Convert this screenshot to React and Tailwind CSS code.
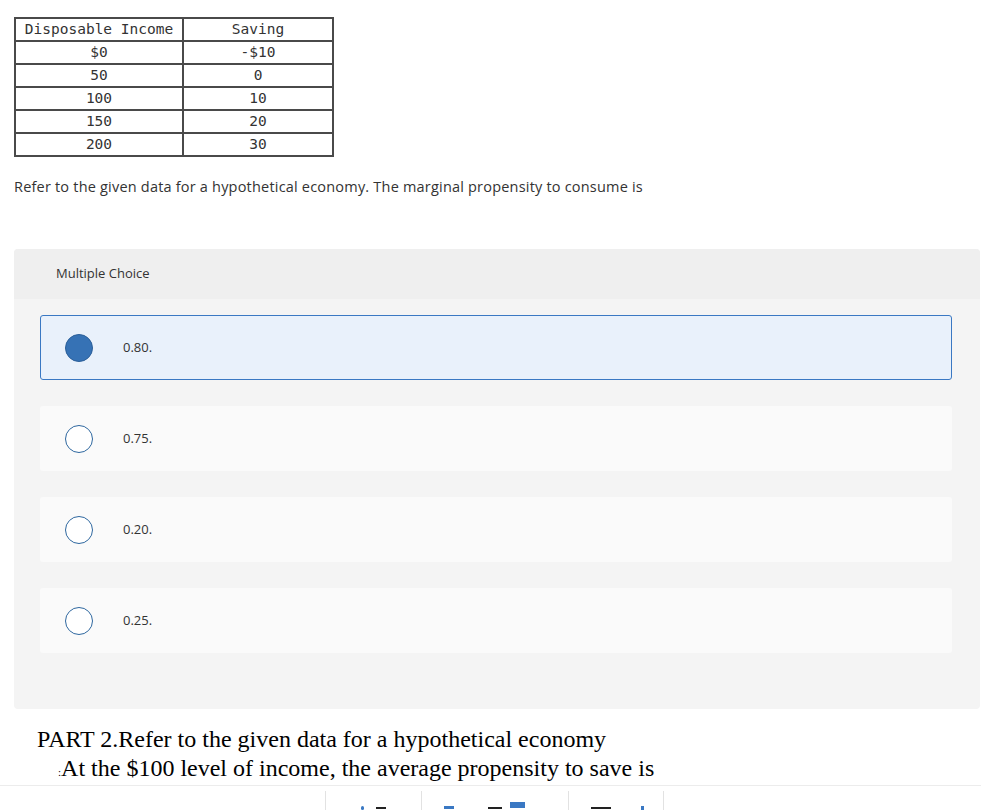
import React from 'react';

const rows = [
  ['$0', '-$10'],
  ['50', '0'],
  ['100', '10'],
  ['150', '20'],
  ['200', '30'],
];

const options = [
  { label: '0.80.', selected: true },
  { label: '0.75.' },
  { label: '0.20.' },
  { label: '0.25.' },
];

function Radio({ selected }) {
  if (selected) {
    return <span className="block w-[28px] h-[28px] rounded-full bg-[#3672b5] border border-[#2b5f99]" />;
  }
  return <span className="block w-[28px] h-[28px] rounded-full bg-white border-[1.5px] border-[#2e679f]" />;
}

export default function App() {
  return (
    <div className="w-[981px] h-[810px] overflow-hidden bg-white" style={{ fontFamily: '"Open Sans", Lato, sans-serif' }}>
      {/* data table */}
      <div className="pt-[17px] pl-[14px]">
        <table
          className="border-2 border-[#4a4a4a] text-[14.5px] text-[#333] leading-none"
          style={{ fontFamily: '"DejaVu Sans Mono", "Liberation Mono", monospace', borderCollapse: 'collapse' }}
        >
          <thead>
            <tr className="h-[23px]">
              <th className="w-[168px] border-2 border-[#4a4a4a] font-normal text-center">Disposable Income</th>
              <th className="w-[150px] border-2 border-[#4a4a4a] font-normal text-center">Saving</th>
            </tr>
          </thead>
          <tbody>
            {rows.map(([a, b]) => (
              <tr key={a} className="h-[23px]">
                <td className="border-2 border-[#4a4a4a] text-center">{a}</td>
                <td className="border-2 border-[#4a4a4a] text-center">{b}</td>
              </tr>
            ))}
          </tbody>
        </table>
      </div>

      <p className="mt-[21px] pl-[14px] text-[14.5px] tracking-[0.2px] text-[#333] leading-[18px]">
        Refer to the given data for a hypothetical economy. The marginal propensity to consume is
      </p>

      {/* multiple choice panel */}
      <div className="mt-[53px] ml-[14px] w-[966px] rounded-[4px] bg-[#f4f4f4] overflow-hidden">
        <div className="h-[50px] bg-[#efefef] flex items-center pl-[42px] text-[13px] text-[#333]">
          Multiple Choice
        </div>
        <div className="pl-[26px] pr-[28px] pt-[16px] pb-[56px] flex flex-col gap-[26px]">
          {options.map((o) => (
            <div
              key={o.label}
              className={
                o.selected
                  ? 'h-[65px] rounded-[3px] border border-[#3a78c3] bg-[#e9f1fb] flex items-center pl-[24px]'
                  : 'h-[65px] rounded-[3px] bg-[#fafafa] flex items-center pl-[25px]'
              }
            >
              <Radio selected={o.selected} />
              <span className="ml-[30px] text-[13px] text-[#333]">{o.label}</span>
            </div>
          ))}
        </div>
      </div>

      {/* part 2 */}
      <div className="pt-[16px] text-[24px] text-black leading-[29px]" style={{ fontFamily: '"Liberation Serif", "Times New Roman", serif' }}>
        <div className="pl-[37px]">PART 2.Refer to the given data for a hypothetical economy</div>
        <div className="pl-[58px] flex items-baseline">
          <span className="text-[11px]">:</span>
          <span>At the $100 level of income, the average propensity to save is</span>
        </div>
      </div>

      {/* bottom toolbar (cut off) */}
      <div className="mt-[-2px] border-t border-[#ececec] flex pt-[5px] h-[30px]">
        <div className="w-[325px]" />
        <div className="w-[96px] border-l border-[#e2e2e2] flex items-start justify-center gap-[12px] pt-[15px]">
          <span className="w-[3px] h-[4px] bg-[#3a78c3] rounded-sm" />
          <span className="w-[10px] h-[2px] bg-[#222] mt-[1px]" />
        </div>
        <div className="w-[147px] border-l border-[#e2e2e2] flex items-start pt-[15px] pl-[22px]">
          <span className="w-[10px] h-[3px] bg-[#3a78c3]" />
          <span className="w-[14px] h-[2px] bg-[#222] ml-[34px] mt-[1px]" />
          <span className="w-[15px] h-[6px] bg-[#3a78c3] ml-[8px] mt-[-4px]" />
        </div>
        <div className="w-[96px] border-l border-r border-[#e2e2e2] flex items-start pt-[15px] pl-[22px] gap-[30px]">
          <span className="w-[20px] h-[2px] bg-[#222] mt-[1px]" />
          <span className="w-[3px] h-[4px] bg-[#3a78c3]" />
        </div>
      </div>
    </div>
  );
}
